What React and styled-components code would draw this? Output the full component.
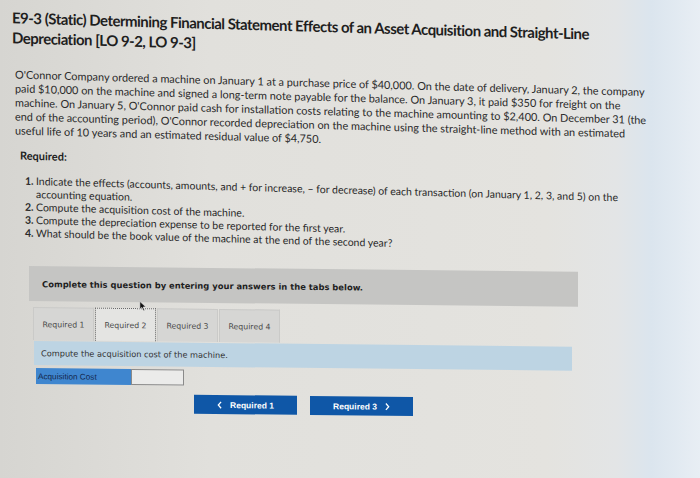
import React from "react";
import styled, { createGlobalStyle } from "styled-components";

const GlobalStyle = createGlobalStyle`
  html, body {
    margin: 0;
    padding: 0;
  }
  body {
    width: 700px;
    height: 478px;
    overflow: hidden;
    background: linear-gradient(
      90deg,
      #d6d5d1 0%,
      #e1e0dc 30%,
      #e4e3df 78%,
      #e3e5e6 88%,
      #dbe5ee 93%,
      #e8eef4 100%
    );
    font-family: Lato, "Open Sans", sans-serif;
    color: #262626;
  }
`;

const title = [
  "E9-3 (Static) Determining Financial Statement Effects of an Asset Acquisition and Straight-Line",
  "Depreciation [LO 9-2, LO 9-3]",
];

const story = [
  "O'Connor Company ordered a machine on January 1 at a purchase price of $40,000. On the date of delivery, January 2, the company",
  "paid $10,000 on the machine and signed a long-term note payable for the balance. On January 3, it paid $350 for freight on the",
  "machine. On January 5, O'Connor paid cash for installation costs relating to the machine amounting to $2,400. On December 31 (the",
  "end of the accounting period), O'Connor recorded depreciation on the machine using the straight-line method with an estimated",
  "useful life of 10 years and an estimated residual value of $4,750.",
];

const steps = [
  [
    "Indicate the effects (accounts, amounts, and + for increase, \u2013 for decrease) of each transaction (on January 1, 2, 3, and 5) on the",
    "accounting equation.",
  ],
  ["Compute the acquisition cost of the machine."],
  ["Compute the depreciation expense to be reported for the first year."],
  ["What should be the book value of the machine at the end of the second year?"],
];

const tabs = ["Required 1", "Required 2", "Required 3", "Required 4"];

export default function App() {
  return (
    <>
      <GlobalStyle />
      <Page>
        <Intro>
          <Title>
            {title.map((t) => (
              <Line key={t}>{t}</Line>
            ))}
          </Title>
          <Story>
            {story.map((t) => (
              <Line key={t}>{t}</Line>
            ))}
          </Story>
          <Subhead>Required:</Subhead>
          <Steps>
            {steps.map((lines, i) => (
              <Step key={i}>
                <Num>{i + 1}.</Num>
                <div>
                  {lines.map((t) => (
                    <Line key={t}>{t}</Line>
                  ))}
                </div>
              </Step>
            ))}
          </Steps>
        </Intro>

        <Panel>
          <Banner>Complete this question by entering your answers in the tabs below.</Banner>
          <TabRow>
            {tabs.map((t, i) => (
              <Tab key={t} $active={i === 1}>
                {t}
              </Tab>
            ))}
            <Cursor viewBox="0 0 10 14" aria-hidden="true">
              <path d="M1 1 L1 11 L3.6 8.6 L5.4 12.6 L7 11.9 L5.3 8 L8.6 8 Z" fill="#111" stroke="#eee" strokeWidth="0.8" />
            </Cursor>
          </TabRow>
          <Prompt>Compute the acquisition cost of the machine.</Prompt>
          <AnswerRow>
            <AnswerLabel>Acquisition Cost</AnswerLabel>
            <AnswerInput />
          </AnswerRow>
          <Nav>
            <NavButton>
              <Chevron viewBox="0 0 6 10" aria-hidden="true">
                <path d="M5 1 L1.5 5 L5 9" />
              </Chevron>
              Required 1
            </NavButton>
            <NavButton>
              Required 3
              <Chevron viewBox="0 0 6 10" aria-hidden="true">
                <path d="M1 1 L4.5 5 L1 9" />
              </Chevron>
            </NavButton>
          </Nav>
        </Panel>
      </Page>
    </>
  );
}

const Page = styled.div`
  padding-top: 7px;
  display: flex;
  flex-direction: column;
`;

const Intro = styled.div`
  display: flex;
  flex-direction: column;
  transform-origin: left top;
  transform: skewY(1.6deg);
`;

const Line = styled.span`
  display: block;
  white-space: nowrap;
`;

const Title = styled.h1`
  margin: 0 0 0 12px;
  font-size: 15px;
  line-height: 20px;
  font-weight: 700;
  letter-spacing: -0.52px;
  color: #1e1e1e;
`;

const Story = styled.p`
  margin: 20px 0 0 15px;
  font-size: 10.9px;
  line-height: 14px;
  color: #2a2a2a;
`;

const Subhead = styled.div`
  margin: 11px 0 0 20px;
  font-size: 11px;
  line-height: 14px;
  font-weight: 700;
  color: #222;
`;

const Steps = styled.div`
  margin: 12px 0 0 25px;
  display: flex;
  flex-direction: column;
  font-size: 10.5px;
  line-height: 13px;
  color: #2a2a2a;
`;

const Step = styled.div`
  display: flex;
`;

const Num = styled.span`
  width: 11px;
  flex: none;
  font-weight: 700;
`;

const Panel = styled.div`
  margin: 27px 0 0 29px;
  width: 549px;
  display: flex;
  flex-direction: column;
  font-family: "DejaVu Sans", Verdana, sans-serif;
  transform-origin: left top;
  transform: skewY(0.6deg);
`;

const Banner = styled.div`
  height: 35px;
  padding-left: 13px;
  display: flex;
  align-items: center;
  background: #c5c5c3;
  font-size: 8.4px;
  font-weight: 700;
  color: #1f1f1f;
`;

const TabRow = styled.div`
  position: relative;
  margin: 6px 0 0 4px;
  display: flex;
`;

const Tab = styled.div`
  width: 61px;
  height: 33px;
  box-sizing: border-box;
  display: flex;
  align-items: center;
  justify-content: center;
  font-size: 7.8px;
  color: #4a4a4a;
  background: ${(p) => (p.$active ? "#e4e4e2" : "#d6d6d4")};
  border: 1px ${(p) => (p.$active ? "dotted #6a6a6a" : "solid #cacac8")};
  border-bottom: none;
  margin-right: 1px;
`;

const Cursor = styled.svg`
  position: absolute;
  left: 106px;
  top: -8px;
  width: 8px;
  height: 12px;
`;

const Prompt = styled.div`
  margin: 1px 6px 0 5px;
  height: 24px;
  padding-left: 7px;
  display: flex;
  align-items: center;
  background: #bdd4e3;
  font-size: 8.2px;
  color: #333;
`;

const AnswerRow = styled.div`
  margin: 3px 0 0 7px;
  display: flex;
  height: 16px;
`;

const AnswerLabel = styled.div`
  width: 93px;
  padding-left: 2px;
  display: flex;
  align-items: center;
  background: #3f86cf;
  font-family: "Liberation Sans", Arial, sans-serif;
  font-size: 8.2px;
  color: #14284d;
`;

const AnswerInput = styled.div`
  width: 53px;
  box-sizing: border-box;
  background: #ebebea;
  border: 1px solid #8a8a8a;
`;

const Nav = styled.div`
  margin-top: 9px;
  display: flex;
  justify-content: center;
  gap: 13px;
`;

const NavButton = styled.div`
  width: 103px;
  height: 19px;
  display: flex;
  align-items: center;
  justify-content: center;
  gap: 8px;
  background: #0f57a7;
  font-family: "Liberation Sans", Arial, sans-serif;
  font-size: 8.5px;
  font-weight: 700;
  color: #fff;
`;

const Chevron = styled.svg`
  width: 5px;
  height: 8px;
  fill: none;
  stroke: #fff;
  stroke-width: 1.6;
`;
